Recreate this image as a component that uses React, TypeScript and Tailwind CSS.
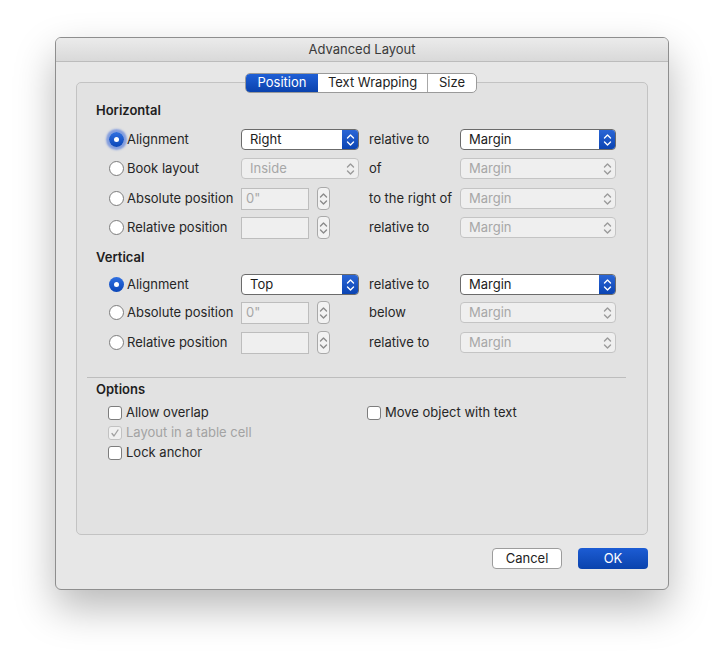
import React from "react"

const Chevrons = ({ color }: { color: string }) => (
  <svg width="9" height="14" viewBox="0 0 9 14" fill="none" stroke={color} strokeWidth="1.4" strokeLinecap="round" strokeLinejoin="round">
    <path d="M1.5 5 L4.5 2 L7.5 5" />
    <path d="M1.5 9 L4.5 12 L7.5 9" />
  </svg>
)

const Radio = ({ checked, focus }: { checked?: boolean; focus?: boolean }) =>
  checked ? (
    <div
      className={
        "flex h-[15px] w-[15px] shrink-0 items-center justify-center rounded-full bg-gradient-to-b from-[#2f6fe0] to-[#0a46b8] " +
        (focus ? "shadow-[0_0_2px_3px_rgba(80,120,220,0.65)]" : "")
      }
    >
      <div className="h-[5px] w-[5px] rounded-full bg-white" />
    </div>
  ) : (
    <div className="h-[15px] w-[15px] shrink-0 rounded-full border border-[#7d7d7d] bg-white" />
  )

const Popup = ({ value, active, w }: { value: string; active?: boolean; w: string }) =>
  active ? (
    <div className={"flex h-[21px] items-stretch overflow-hidden rounded-[4px] border border-[#6b6b6b] bg-white " + w}>
      <div className="flex flex-1 items-center pl-[8px] text-[13px] text-[#1c1c1c]">{value}</div>
      <div className="flex w-[16px] items-center justify-center bg-gradient-to-b from-[#2a66d6] to-[#0a44b3]">
        <Chevrons color="#ffffff" />
      </div>
    </div>
  ) : (
    <div className={"flex h-[21px] items-center rounded-[4px] border border-[#c4c4c4] bg-[#efefef] " + w}>
      <div className="flex-1 pl-[8px] text-[13px] text-[#a7a7a7]">{value}</div>
      <div className="flex w-[16px] items-center justify-center">
        <Chevrons color="#9a9a9a" />
      </div>
    </div>
  )

const Field = ({ value }: { value?: string }) => (
  <div className="flex items-center">
    <div className="flex h-[22px] w-[68px] items-center border border-[#bdbdbd] bg-[#efefef] pl-[4px] text-[13px] text-[#a7a7a7]">
      {value}
    </div>
    <div className="ml-[8px] flex h-[23px] w-[13px] items-center justify-center rounded-[4px] border border-[#a9a9a9] bg-[#f2f2f2]">
      <Chevrons color="#8a8a8a" />
    </div>
  </div>
)

const Check = ({ checked, disabled }: { checked?: boolean; disabled?: boolean }) => (
  <div
    className={
      "flex h-[14px] w-[14px] shrink-0 items-center justify-center rounded-[3px] border " +
      (disabled ? "border-[#c2c2c2] bg-[#f0f0f0]" : "border-[#7d7d7d] bg-white")
    }
  >
    {checked && (
      <svg width="10" height="10" viewBox="0 0 10 10" fill="none" stroke="#a0a0a0" strokeWidth="1.3" strokeLinecap="round" strokeLinejoin="round">
        <path d="M2 5.5 L4 8 L8 2" />
      </svg>
    )}
  </div>
)

type RowProps = {
  label: string
  checked?: boolean
  focus?: boolean
  mid: React.ReactNode
  rel: string
  right: React.ReactNode
  h: string
}

const Row = ({ label, checked, focus, mid, rel, right, h }: RowProps) => (
  <div className={"flex items-center " + h}>
    <div className="flex w-[132px] items-center gap-[3px]">
      <Radio checked={checked} focus={focus} />
      <span className="text-[13px] text-[#262626]">{label}</span>
    </div>
    <div className="w-[128px]">{mid}</div>
    <div className="w-[91px] text-[13px] text-[#262626]">{rel}</div>
    {right}
  </div>
)

export default function App() {
  return (
    <div className="h-[663px] w-[724px] bg-white pl-[55px] pt-[37px] font-['Inter',sans-serif] antialiased">
      <div className="flex h-[553px] w-[614px] flex-col overflow-hidden rounded-[6px] border border-[#8e8e8e] bg-[#e7e7e7] shadow-[0_18px_40px_rgba(0,0,0,0.28)]">
        {/* title bar */}
        <div className="flex h-[24px] shrink-0 items-center justify-center border-b border-[#bcbcbc] bg-gradient-to-b from-[#ebebeb] to-[#d9d9d9] text-[13px] text-[#3a3a3a]">
          Advanced Layout
        </div>

        <div className="flex flex-1 flex-col px-[20px] pt-[11px]">
          {/* tabs */}
          <div className="relative z-10 flex justify-center">
            <div className="ml-[-2px] flex h-[20px] overflow-hidden rounded-[5px] border border-[#9a9a9a] bg-white text-[13px] text-[#222]">
              <div className="flex w-[72px] items-center justify-center bg-gradient-to-b from-[#1f5fd6] to-[#0a42ad] text-white">Position</div>
              <div className="flex w-[110px] items-center justify-center border-r border-[#a8a8a8]">Text Wrapping</div>
              <div className="flex w-[48px] items-center justify-center">Size</div>
            </div>
          </div>

          {/* group box */}
          <div className="mt-[-11px] h-[453px] rounded-[5px] border border-[#c3c3c3] bg-[#e2e2e2] pl-[19px] pt-[18px]">
            <div className="text-[13px] font-semibold text-[#1e1e1e]">Horizontal</div>
            <div className="mt-[5px] pl-[13px]">
              <Row h="h-[28px]" label="Alignment" checked focus mid={<Popup value="Right" active w="w-[118px]" />} rel="relative to" right={<Popup value="Margin" active w="w-[156px]" />} />
              <Row h="h-[30px]" label="Book layout" mid={<Popup value="Inside" w="w-[118px]" />} rel="of" right={<Popup value="Margin" w="w-[156px]" />} />
              <Row h="h-[30px]" label="Absolute position" mid={<Field value={'0"'} />} rel="to the right of" right={<Popup value="Margin" w="w-[156px]" />} />
              <Row h="h-[28px]" label="Relative position" mid={<Field />} rel="relative to" right={<Popup value="Margin" w="w-[156px]" />} />
            </div>

            <div className="mt-[6px] text-[13px] font-semibold text-[#1e1e1e]">Vertical</div>
            <div className="mt-[4px] pl-[13px]">
              <Row h="h-[27px]" label="Alignment" checked mid={<Popup value="Top" active w="w-[118px]" />} rel="relative to" right={<Popup value="Margin" active w="w-[156px]" />} />
              <Row h="h-[29px]" label="Absolute position" mid={<Field value={'0"'} />} rel="below" right={<Popup value="Margin" w="w-[156px]" />} />
              <Row h="h-[31px]" label="Relative position" mid={<Field />} rel="relative to" right={<Popup value="Margin" w="w-[156px]" />} />
            </div>

            <div className="ml-[-9px] mr-[21px] mt-[19px] h-px bg-[#bdbdbd]" />

            <div className="mt-[2px] text-[13px] font-semibold text-[#1e1e1e]">Options</div>
            <div className="mt-[3px] flex pl-[12px] text-[13px] text-[#262626]">
              <div className="w-[259px]">
                <div className="flex h-[20px] items-center gap-[4px]">
                  <Check />
                  <span>Allow overlap</span>
                </div>
                <div className="flex h-[20px] items-center gap-[4px] text-[#a3a3a3]">
                  <Check checked disabled />
                  <span>Layout in a table cell</span>
                </div>
                <div className="flex h-[20px] items-center gap-[4px]">
                  <Check />
                  <span>Lock anchor</span>
                </div>
              </div>
              <div>
                <div className="flex h-[20px] items-center gap-[4px]">
                  <Check />
                  <span>Move object with text</span>
                </div>
              </div>
            </div>
          </div>

          {/* buttons */}
          <div className="mt-[13px] flex justify-end gap-[16px] text-[13px]">
            <button className="h-[21px] w-[70px] rounded-[4px] border border-[#9c9c9c] bg-white text-[#222]">Cancel</button>
            <button className="h-[21px] w-[70px] rounded-[4px] bg-gradient-to-b from-[#1c5cd4] to-[#0a43ad] text-white">OK</button>
          </div>
        </div>
      </div>
    </div>
  )
}
